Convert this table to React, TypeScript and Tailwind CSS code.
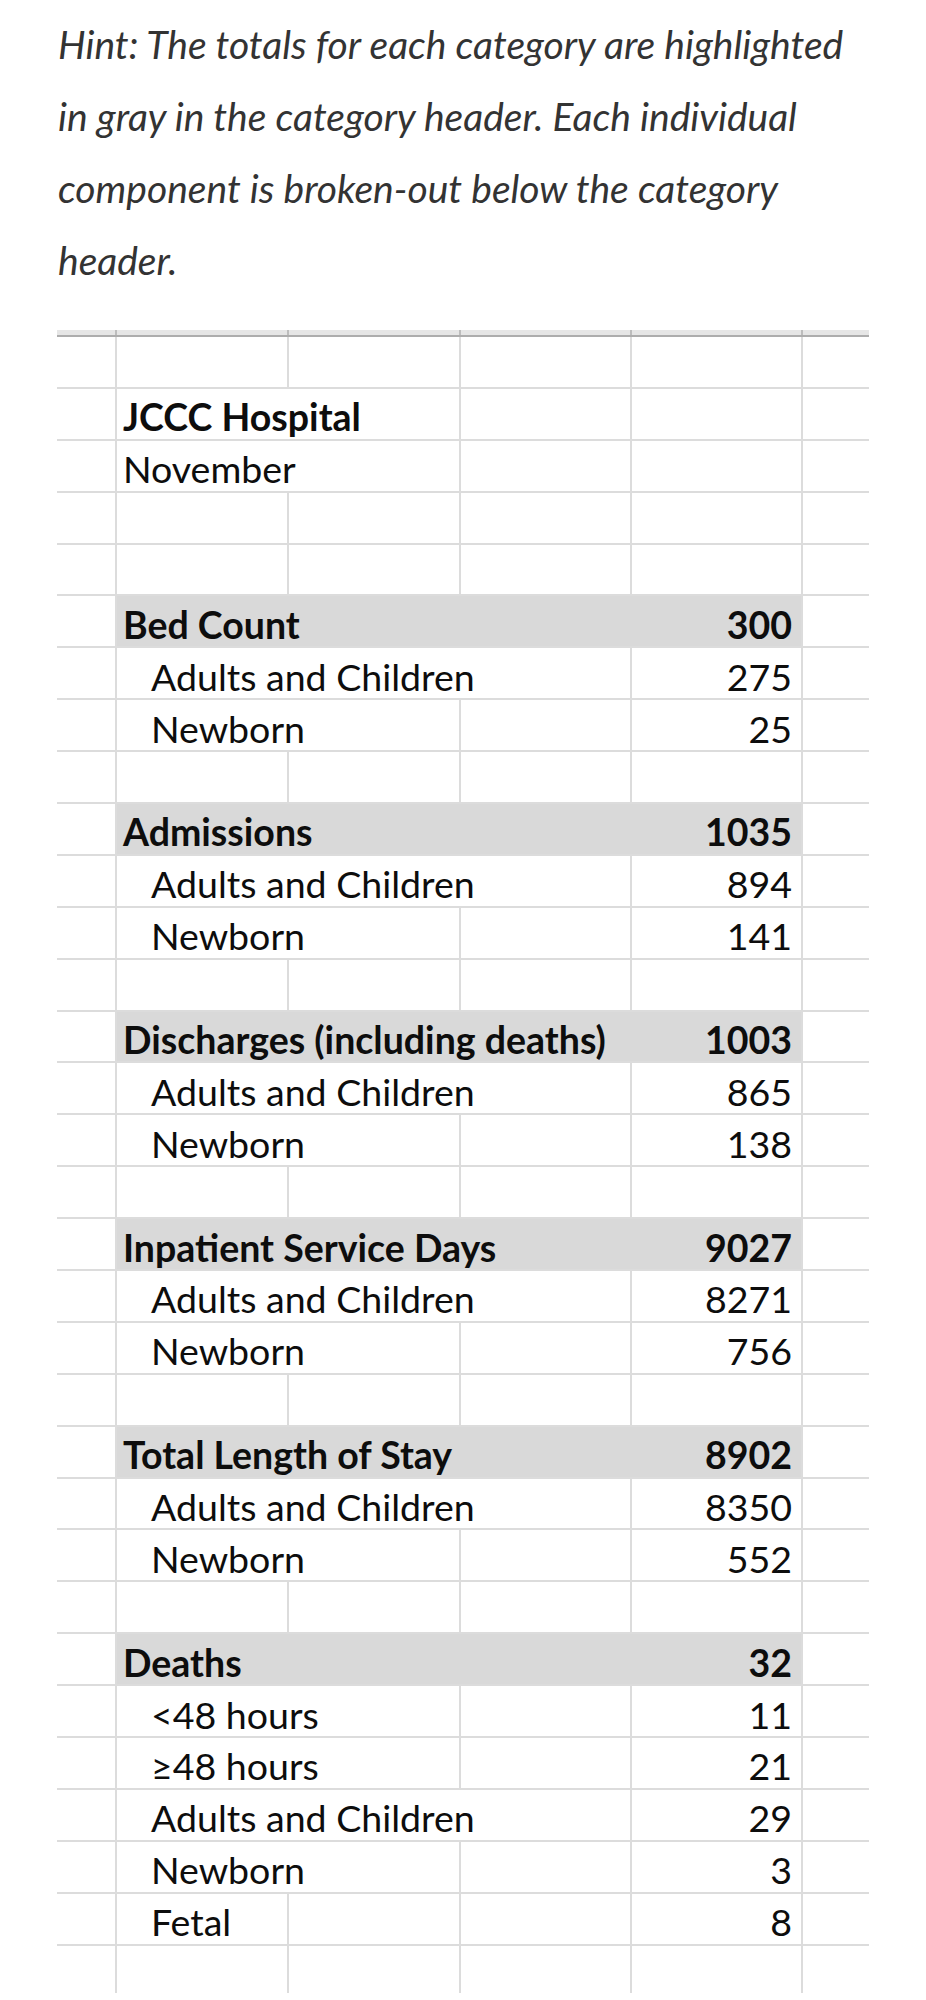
import React from 'react';

type Kind = 'empty' | 'title' | 'plain' | 'head' | 'sub';

interface Row {
  kind: Kind;
  label?: string;
  value?: string;
  span?: 1 | 2 | 3;
}

const grid = 'grid grid-cols-[58px_172px_172px_171px_171px_68px]';
const line = 'border-l-2 border-[#dcdcdc]';
const spanClass = { 1: 'col-span-1', 2: 'col-span-2', 3: 'col-span-3' };

const sections: { title: string; total: string; items: [string, string, 1 | 2 | 3][] }[] = [
  { title: 'Bed Count', total: '300', items: [['Adults and Children', '275', 3], ['Newborn', '25', 2]] },
  { title: 'Admissions', total: '1035', items: [['Adults and Children', '894', 3], ['Newborn', '141', 2]] },
  { title: 'Discharges (including deaths)', total: '1003', items: [['Adults and Children', '865', 3], ['Newborn', '138', 2]] },
  { title: 'Inpatient Service Days', total: '9027', items: [['Adults and Children', '8271', 3], ['Newborn', '756', 2]] },
  { title: 'Total Length of Stay', total: '8902', items: [['Adults and Children', '8350', 3], ['Newborn', '552', 2]] },
  {
    title: 'Deaths',
    total: '32',
    items: [
      ['<48 hours', '11', 2],
      ['≥48 hours', '21', 2],
      ['Adults and Children', '29', 3],
      ['Newborn', '3', 2],
      ['Fetal', '8', 1],
    ],
  },
];

const rows: Row[] = [
  { kind: 'empty' },
  { kind: 'title', label: 'JCCC Hospital', span: 2 },
  { kind: 'plain', label: 'November', span: 2 },
  { kind: 'empty' },
];
sections.forEach((s) => {
  rows.push({ kind: 'empty' });
  rows.push({ kind: 'head', label: s.title, value: s.total });
  s.items.forEach(([label, value, span]) => rows.push({ kind: 'sub', label, value, span }));
});

function Cell({ className = '', children }: { className?: string; children?: React.ReactNode }) {
  return <div className={`flex items-end pb-[3px] whitespace-nowrap ${className}`}>{children}</div>;
}

function SheetRow({ row }: { row: Row }) {
  if (row.kind === 'head') {
    return (
      <div className={`${grid} h-[51.9px] border-b-2 border-[#dcdcdc]`}>
        <div />
        <Cell className={`col-span-3 ${line} bg-[#d9d9d9] pl-[6px] font-bold`}>{row.label}</Cell>
        <Cell className="justify-end bg-[#d9d9d9] pr-[9px] font-bold">{row.value}</Cell>
        <div className={line} />
      </div>
    );
  }

  if (row.kind === 'empty') {
    return (
      <div className={`${grid} h-[51.9px] border-b-2 border-[#dcdcdc]`}>
        <div />
        <div className={line} />
        <div className={line} />
        <div className={line} />
        <div className={line} />
        <div className={line} />
      </div>
    );
  }

  const span = row.span ?? 1;
  const fillers = 3 - span;
  return (
    <div className={`${grid} h-[51.9px] border-b-2 border-[#dcdcdc]`}>
      <div />
      <Cell
        className={`${spanClass[span]} ${line} ${row.kind === 'sub' ? 'pl-[34px]' : 'pl-[6px]'} ${
          row.kind === 'title' ? 'font-bold' : ''
        }`}
      >
        {row.label}
      </Cell>
      {fillers >= 1 && <div className={line} />}
      {fillers >= 2 && <div className={line} />}
      <Cell className={`${line} justify-end pr-[9px]`}>{row.value}</Cell>
      <div className={line} />
    </div>
  );
}

export default function App() {
  return (
    <div className="w-[926px] min-h-[2000px] bg-white">
      <p className="pt-[8px] pl-[58px] w-[880px] font-['Lato',sans-serif] italic text-[39px] leading-[72px] text-[#333333]">
        Hint: The totals for each category are highlighted in gray in the category header. Each individual component
        is broken-out below the category header.
      </p>

      <div className="mt-[34px] ml-[57px] w-[812px] font-['Lato',sans-serif] text-[37.5px] leading-none text-[#0d0d0d]">
        {/* column header edge */}
        <div className={`${grid} h-[7px] bg-[#e6e6e6] border-b-2 border-[#adadad]`}>
          <div />
          <div className="border-l-2 border-[#bdbdbd]" />
          <div className="border-l-2 border-[#bdbdbd]" />
          <div className="border-l-2 border-[#bdbdbd]" />
          <div className="border-l-2 border-[#bdbdbd]" />
          <div className="border-l-2 border-[#bdbdbd]" />
        </div>

        {rows.map((row, i) => (
          <SheetRow key={i} row={row} />
        ))}

        <div className={`${grid} h-[47px]`}>
          <div />
          <div className={line} />
          <div className={line} />
          <div className={line} />
          <div className={line} />
          <div className={line} />
        </div>
      </div>
    </div>
  );
}
